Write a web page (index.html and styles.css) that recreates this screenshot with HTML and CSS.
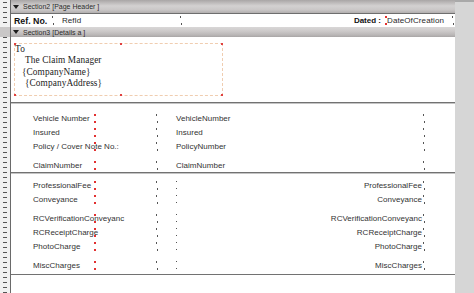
FILE: index.html
```html
<!DOCTYPE html>
<html>
<head>
<meta charset="utf-8">
<link rel="stylesheet" href="styles.css">
</head>
<body>
<div class="page">
  <div class="ruler"></div>
  <div class="main">
    <div class="bar"><span class="tri"></span>Section2 [Page Header ]</div>
    <div class="hdr">
      <span class="b ref">Ref. No.</span><span class="mk"></span>
      <span class="refid">RefId</span><span class="mk"></span>
      <span class="spacer"></span>
      <span class="b dated">Dated :</span><span class="mk red"></span>
      <span class="date">DateOfCreation</span><span class="mk"></span>
    </div>
    <div class="bar bar2"><span class="tri"></span>Section3 [Details a ]</div>
    <div class="details">
      <div class="addr">
        <span class="h h-tl"></span><span class="h h-tm"></span><span class="h h-tr"></span>
        <span class="h h-bl"></span><span class="h h-bm"></span><span class="h h-br"></span>
        <div class="l0">To</div>
        <div class="l1">The Claim Manager</div>
        <div class="l2">{CompanyName}</div>
        <div class="l1">{CompanyAddress}</div>
      </div>
      <div class="sec s1">
        <div class="row"><span></span><span class="lab">Vehicle Number</span><span class="mk red"></span><span></span><span class="mk"></span><span></span><span class="val">VehicleNumber</span><span class="mk"></span></div>
        <div class="row"><span></span><span class="lab">Insured</span><span class="mk red"></span><span></span><span class="mk"></span><span></span><span class="val">Insured</span><span class="mk"></span></div>
        <div class="row"><span></span><span class="lab">Policy / Cover Note No.:</span><span class="mk red"></span><span></span><span class="mk"></span><span></span><span class="val">PolicyNumber</span><span class="mk"></span></div>
        <div class="row gap"><span></span><span class="lab">ClaimNumber</span><span class="mk red"></span><span></span><span class="mk"></span><span></span><span class="val">ClaimNumber</span><span class="mk"></span></div>
      </div>
      <div class="sec s2">
        <div class="row"><span></span><span class="lab">ProfessionalFee</span><span class="mk red"></span><span></span><span class="mk"></span><span></span><span class="val r"><span class="dot"></span><span>ProfessionalFee</span></span><span class="mk"></span></div>
        <div class="row"><span></span><span class="lab">Conveyance</span><span class="mk red"></span><span></span><span class="mk"></span><span></span><span class="val r"><span class="dot"></span><span>Conveyance</span></span><span class="mk"></span></div>
        <div class="row gap"><span></span><span class="lab">RCVerificationConveyanc</span><span class="mk red"></span><span></span><span class="mk"></span><span></span><span class="val r"><span class="dot"></span><span>RCVerificationConveyanc</span></span><span class="mk"></span></div>
        <div class="row"><span></span><span class="lab">RCReceiptCharge</span><span class="mk red"></span><span></span><span class="mk"></span><span></span><span class="val r"><span class="dot"></span><span>RCReceiptCharge</span></span><span class="mk"></span></div>
        <div class="row"><span></span><span class="lab">PhotoCharge</span><span class="mk red"></span><span></span><span class="mk"></span><span></span><span class="val r"><span class="dot"></span><span>PhotoCharge</span></span><span class="mk"></span></div>
        <div class="row gap"><span></span><span class="lab">MiscCharges</span><span class="mk red"></span><span></span><span class="mk"></span><span></span><span class="val r"><span class="dot"></span><span>MiscCharges</span></span><span class="mk"></span></div>
      </div>
    </div>
  </div>
  <div class="gutter"></div>
</div>
</body>
</html>
```

FILE: styles.css
```css
html, body {
  margin: 0;
  padding: 0;
  background: #fff;
}
body {
  font-family: "Liberation Sans", Arial, sans-serif;
  color: #2a2a2a;
}
.page {
  display: flex;
  width: 474px;
  height: 293px;
  overflow: hidden;
  background: #fff;
}
.ruler {
  width: 10px;
  flex: none;
  border-right: 1px solid #6a6a6a;
  background:
    linear-gradient(#c9c7c7, #c9c7c7) 0 27px / 100% 10px no-repeat,
    repeating-linear-gradient(to bottom, #555 0 1px, transparent 1px 5px) 3px 2px / 4px 100% no-repeat,
    #f1f1f1;
}
.main {
  width: 444px;
  flex: none;
  display: flex;
  flex-direction: column;
}
.gutter {
  flex: 1;
  background: #d6d6d6;
  border-top: 2px solid #a9a9a9;
}
.bar {
  height: 13px;
  flex: none;
  box-sizing: border-box;
  display: flex;
  align-items: center;
  padding-left: 2px;
  font-size: 7px;
  color: #2b2b2b;
  background: linear-gradient(#a9a6a6 0, #bcb9b9 20%, #d3d1d1 45%, #cac7c7 75%, #b2afaf 100%);
  white-space: nowrap;
}
.bar2 {
  height: 10px;
  background: linear-gradient(#d9d7d7 0, #cdcaca 40%, #b9b6b6 80%, #a8a5a5 100%);
}
.tri {
  width: 0;
  height: 0;
  border-left: 3px solid transparent;
  border-right: 3px solid transparent;
  border-top: 4px solid #1e1e1e;
  margin-right: 4px;
}
.hdr {
  height: 13px;
  flex: none;
  border-top: 1px solid #6e6e6e;
  display: flex;
  align-items: center;
  padding-left: 3px;
  padding-right: 1px;
  font-size: 8px;
  white-space: nowrap;
}
.b {
  font-weight: bold;
  color: #111;
}
.ref {
  width: 38px;
  font-size: 8.8px;
}
.refid {
  margin-left: 8px;
  width: 118px;
}
.spacer {
  flex: 1;
}
.dated {
  margin-right: 4px;
}
.date {
  width: 56px;
  margin-right: 9px;
  letter-spacing: 0.1px;
}
.mk {
  display: inline-block;
  width: 2px;
  height: 9px;
  flex: none;
  align-self: center;
  background:
    linear-gradient(#555, #555) 0 0 / 1px 2px no-repeat,
    linear-gradient(#555, #555) 1px 100% / 1px 2px no-repeat;
}
.mk.red {
  background:
    linear-gradient(#e23030, #e23030) 0 0 / 2px 2px no-repeat,
    linear-gradient(#e23030, #e23030) 0 100% / 2px 2px no-repeat;
}
.details {
  flex: 1;
  display: flex;
  flex-direction: column;
}
.addr {
  position: relative;
  margin: 6px 0 0 3px;
  width: 209px;
  height: 53px;
  box-sizing: border-box;
  border: 1px dashed #f0cdb0;
  font-family: "Liberation Serif", "Times New Roman", serif;
  font-size: 9.3px;
  line-height: 11.3px;
  color: #222;
  letter-spacing: 0.1px;
}
.l0 { padding-left: 0; }
.l1 { padding-left: 10px; }
.l2 { padding-left: 7px; }
.h {
  position: absolute;
  width: 2px;
  height: 2px;
  background: #e04040;
}
.h-tl { left: -1px; top: -1px; }
.h-tm { left: 105px; top: -1px; }
.h-tr { right: -1px; top: -1px; }
.h-bl { left: -1px; bottom: -1px; }
.h-bm { left: 105px; bottom: -1px; }
.h-br { right: -1px; bottom: -1px; }
.sec {
  border-top: 1px solid #727272;
  box-shadow: inset 0 1px 0 #c4c4c4;
}
.s1 {
  margin-top: 6px;
  padding-top: 8px;
}
.s2 {
  padding-top: 5px;
  padding-bottom: 2px;
  border-bottom: 1px solid #727272;
}
.row {
  display: grid;
  grid-template-columns: 22px 61px 2px 60px 2px 18px 247px 2px 30px;
  height: 14px;
  align-items: center;
  font-size: 8px;
  letter-spacing: 0.02px;
  white-space: nowrap;
  color: #333;
}
.row.gap {
  margin-top: 5px;
}
.val.r {
  display: flex;
  align-items: center;
  justify-content: space-between;
  padding-right: 1px;
}
.dot {
  width: 1px;
  height: 8px;
  background:
    linear-gradient(#555, #555) 0 0 / 1px 1px no-repeat,
    linear-gradient(#555, #555) 0 100% / 1px 1px no-repeat;
}
```
